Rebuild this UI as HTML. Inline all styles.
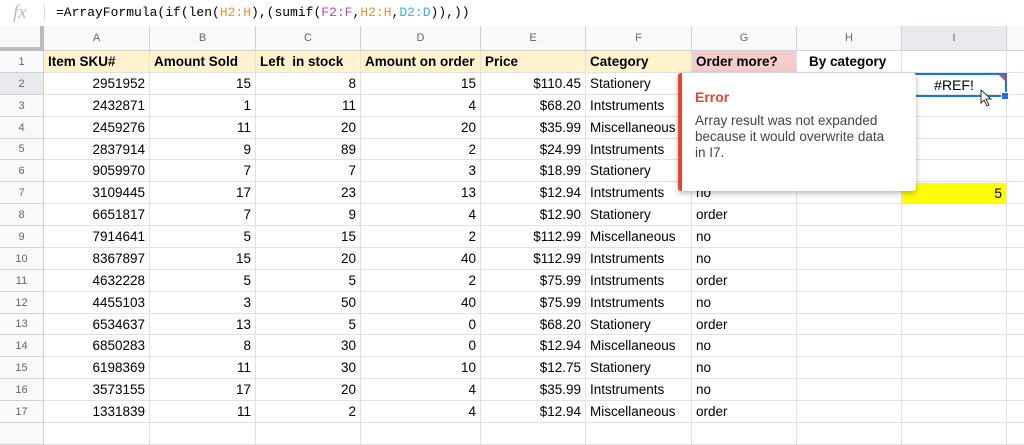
<!DOCTYPE html><html><head><style>
body{margin:0;width:1024px;height:428px;overflow:hidden;background:#fff;font-family:"Liberation Sans",Arial,sans-serif;position:relative}
#fb{position:absolute;left:0;top:0;width:1024px;height:26px;border-bottom:1px solid #e0e0e0;background:#fff}
#fx{position:absolute;left:13px;top:2px;font-family:"Liberation Serif",serif;font-style:italic;font-size:19px;color:#bbb}
#sep{position:absolute;left:44px;top:5px;width:1px;height:16px;background:#ddd}
#f{position:absolute;left:56px;top:5px;font-family:"Liberation Mono",monospace;font-size:13px;color:#000}
.c{position:absolute;box-sizing:border-box;border-right:1px solid #e2e2e2;border-bottom:1px solid #e2e2e2;padding:0 4px;white-space:nowrap;overflow:hidden;font-size:13.5px;color:#000}
.h{background:#f8f9fa;color:#666;text-align:center;font-size:11px;border-color:#d0d0d0}
.r{text-align:right}
.b{font-weight:bold;background:#fff2cc}
#pop{position:absolute;left:678px;top:73px;width:234px;height:118px;background:#fff;border-left:4px solid #ea4335;border-radius:3px;box-shadow:0 2px 6px rgba(0,0,0,.3)}
</style></head><body>
<div id="fb"><span id="fx">fx</span><div id="sep"></div><div id="f">=ArrayFormula(if(len(<span style="color:#e69138">H2:H</span>),(sumif(<span style="color:#a64dbd">F2:F</span>,<span style="color:#e69138">H2:H</span>,<span style="color:#3daee9">D2:D</span>)),))</div></div>
<div id="g"></div>
<div style="position:absolute;left:40px;top:26px;width:4px;height:25px;background:#bbb"></div>
<div style="position:absolute;left:0;top:47px;width:44px;height:4px;background:#bbb"></div>
<div style="position:absolute;left:901px;top:73px;width:106px;height:24px;border:2px solid #1a73e8;box-sizing:border-box"></div>
<div style="position:absolute;left:1001px;top:92px;width:6px;height:6px;background:#1a73e8;border:1px solid #fff"></div>
<div style="position:absolute;left:902px;top:75px;width:104px;text-align:center;font-size:14px;line-height:21px">#REF!</div>
<div style="position:absolute;left:999px;top:75px;width:0;height:0;border-left:6px solid transparent;border-top:6px solid #ea4335"></div>
<svg style="position:absolute;left:980px;top:89px" width="12" height="18"><path d="M1 1 L1 14 L4 11 L7 17 L9 16 L6 10 L11 10 Z" fill="#fff" stroke="#333"/></svg>
<div style="position:absolute;left:902px;top:183px;width:104px;height:21px;background:#ffff00;text-align:right;font-size:14px;line-height:21px;box-sizing:border-box;padding-right:4px">5</div>
<div id="pop"><div style="position:absolute;left:13px;top:16px;color:#ea4335;font-weight:bold;font-size:14px">Error</div><div style="position:absolute;left:13px;top:40px;width:200px;color:#444;font-size:13.5px;line-height:16px">Array result was not expanded because it would overwrite data in I7.</div></div>
<script>
var X=[0,44,150,256,361,481,586,692,797,902,1007,1040];
var d=[["Item SKU#","Amount Sold","Left &nbsp;in stock","Amount on order","Price","Category","Order more?","By category"],
["2951952",15,8,15,"$110.45","Stationery",""],["2432871",1,11,4,"$68.20","Intstruments",""],["2459276",11,20,20,"$35.99","Miscellaneous",""],["2837914",9,89,2,"$24.99","Intstruments",""],["9059970",7,7,3,"$18.99","Stationery",""],["3109445",17,23,13,"$12.94","Intstruments","no"],["6651817",7,9,4,"$12.90","Stationery","order"],["7914641",5,15,2,"$112.99","Miscellaneous","no"],["8367897",15,20,40,"$112.99","Intstruments","no"],["4632228",5,5,2,"$75.99","Intstruments","order"],["4455103",3,50,40,"$75.99","Intstruments","no"],["6534637",13,5,0,"$68.20","Stationery","order"],["6850283",8,30,0,"$12.94","Miscellaneous","no"],["6198369",11,30,10,"$12.75","Stationery","no"],["3573155",17,20,4,"$35.99","Intstruments","no"],["1331839",11,2,4,"$12.94","Miscellaneous","order"],["","","","","","",""]];
var h="";
function cell(x0,x1,y0,y1,cls,st,t){h+='<div class="c '+cls+'" style="left:'+x0+'px;top:'+y0+'px;width:'+(x1-x0)+'px;height:'+(y1-y0)+'px;line-height:'+(y1-y0)+'px;'+st+'">'+t+'</div>';}
var L=["","A","B","C","D","E","F","G","H","I",""];
for(var j=0;j<11;j++)cell(X[j],X[j+1],26,51,"h",j==9?"background:#e8eaed":"",L[j]);
function Y(i){return i==0?51:Math.round(73+(i-1)*21.87);}
for(var i=0;i<18;i++){var y0=Y(i),y1=Y(i+1),r=d[i];
cell(0,44,y0,y1,"h",i==1?"background:#e8eaed":"",i<17?i+1:"");
for(var j=0;j<10;j++){var t=r[j]!==undefined?r[j]:"",cls="",st="";
if(i==0){if(j<7)cls="b";if(j==6)st="background:#f4cccc";if(j==7)st="font-weight:bold;padding-left:12px";}
else if(j<5)cls="r";
cell(X[j+1],X[j+2],y0,y1,cls,st,t);}}
document.getElementById("g").innerHTML=h;
</script>
</body></html>
